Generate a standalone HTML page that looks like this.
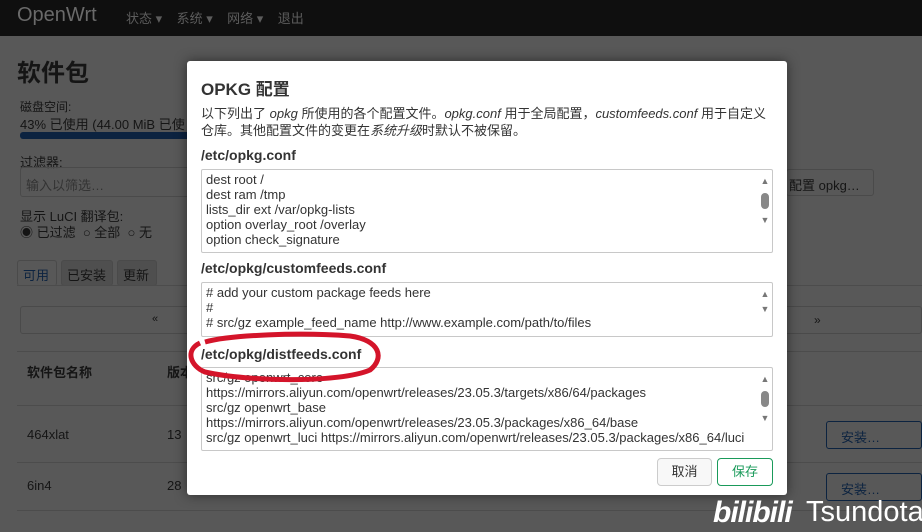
<!DOCTYPE html>
<html><head><meta charset="utf-8"><style>
*{box-sizing:border-box;margin:0;padding:0}
body{width:922px;height:532px;overflow:hidden;background:#585858;font-family:"Liberation Sans","Noto Sans CJK SC",sans-serif;color:#1a1a1a;position:relative;font-size:13px}
.a{position:absolute;white-space:nowrap}
.hdr{left:0;top:0;width:922px;height:36px;background:#0f0f0f}
.d{color:#151515}
.box{position:absolute;border:1px solid #4a4a4a;border-radius:3px}
.line{position:absolute;height:1px;background:#4c4c4c}
.modal{position:absolute;left:187px;top:61px;width:600px;height:434px;background:#fff;border-radius:3px;box-shadow:0 0 12px rgba(0,0,0,.5)}
.ta{position:absolute;left:14px;width:572px;border:1px solid #c8c8c8;border-radius:2px;font-size:13px;line-height:15px;color:#333;padding:2px 18px 0 4px;overflow:hidden}
.sb{position:absolute;right:2px;top:4px;width:10px;font-size:9px;color:#777;text-align:center}
.h{font-weight:bold;font-size:14px;color:#333}
.btn{position:absolute;height:28px;border-radius:4px;font-size:13px;text-align:center;line-height:26px}
</style></head><body>
<div class="a hdr"></div>
<div class="a" style="left:17px;top:4px;font-size:20px;color:#6a6a6a">OpenWrt</div>
<div class="a" style="left:126px;top:8px;color:#5c5c5c;font-size:13px">状态 ▾&nbsp;&nbsp;&nbsp; 系统 ▾&nbsp;&nbsp;&nbsp; 网络 ▾&nbsp;&nbsp;&nbsp; 退出</div>
<div class="a d" style="left:17px;top:53px;font-size:24px;font-weight:bold">软件包</div>
<div class="a d" style="left:20px;top:98px;font-size:12px">磁盘空间:</div>
<div class="a d" style="left:20px;top:114px;font-size:13px">43% 已使用 (44.00 MiB 已使</div>
<div class="a" style="left:20px;top:132px;width:170px;height:7px;background:#0c2340;border-radius:3px"></div>
<div class="a d" style="left:20px;top:152px;font-size:13px">过滤器:</div>
<div class="box" style="left:20px;top:167px;width:170px;height:30px"></div>
<div class="a" style="left:26px;top:175px;color:#333;font-size:13px">输入以筛选…</div>
<div class="a d" style="left:20px;top:206px;font-size:13px">显示 LuCI 翻译包:</div>
<div class="a d" style="left:20px;top:222px;font-size:13px">◉ 已过滤 &nbsp;○ 全部 &nbsp;○ 无</div>
<div class="box" style="left:17px;top:260px;width:40px;height:26px;border-bottom:none"></div>
<div class="a" style="left:23px;top:265px;color:#0c2340">可用</div>
<div class="box" style="left:61px;top:260px;width:52px;height:26px;background:#4f4f4f"></div>
<div class="a d" style="left:67px;top:265px">已安装</div>
<div class="box" style="left:117px;top:260px;width:40px;height:26px;background:#4f4f4f"></div>
<div class="a d" style="left:123px;top:265px">更新</div>
<div class="line" style="left:17px;top:285px;width:905px"></div>
<div class="box" style="left:20px;top:306px;width:902px;height:28px"></div>
<div class="a d" style="left:152px;top:313px;font-size:11px">«</div>
<div class="a d" style="left:814px;top:313px;font-size:12px">»</div>
<div class="line" style="left:17px;top:351px;width:905px"></div>
<div class="a d" style="left:27px;top:362px;font-weight:bold">软件包名称</div>
<div class="a d" style="left:167px;top:362px;font-weight:bold">版本</div>
<div class="line" style="left:17px;top:405px;width:905px"></div>
<div class="a d" style="left:27px;top:427px">464xlat</div>
<div class="a d" style="left:167px;top:427px">13</div>
<div class="line" style="left:17px;top:462px;width:905px"></div>
<div class="a d" style="left:27px;top:478px">6in4</div>
<div class="a d" style="left:167px;top:478px">28</div>
<div class="line" style="left:17px;top:510px;width:905px"></div>
<div class="box" style="left:786px;top:169px;width:88px;height:27px"></div>
<div class="a d" style="left:789px;top:175px">配置 opkg…</div>
<div class="box" style="left:826px;top:421px;width:96px;height:28px;border-color:#0c2340"></div>
<div class="a" style="left:841px;top:427px;color:#0c2340">安装…</div>
<div class="box" style="left:826px;top:473px;width:96px;height:28px;border-color:#0c2340"></div>
<div class="a" style="left:841px;top:479px;color:#0c2340">安装…</div>

<div class="modal">
<div class="a" style="left:14px;top:14px;font-size:17px;font-weight:bold;color:#333">OPKG 配置</div>
<div class="a" style="left:14px;top:44px;font-size:13px;color:#333;line-height:17px">以下列出了 <i>opkg</i> 所使用的各个配置文件。<i>opkg.conf</i> 用于全局配置，<i>customfeeds.conf</i> 用于自定义<br>仓库。其他配置文件的变更在<i>系统升级</i>时默认不被保留。</div>
<div class="a h" style="left:14px;top:86px">/etc/opkg.conf</div>
<div class="ta" style="top:108px;height:84px">dest root /<br>dest ram /tmp<br>lists_dir ext /var/opkg-lists<br>option overlay_root /overlay<br>option check_signature
<div class="sb">▲<div style="width:8px;height:16px;background:#888;border-radius:4px;margin:4px auto"></div>▼</div></div>
<div class="a h" style="left:14px;top:199px">/etc/opkg/customfeeds.conf</div>
<div class="ta" style="top:221px;height:55px">#&nbsp;add your custom package feeds here<br>#<br># src/gz example_feed_name http://www.example.com/path/to/files
<div class="sb">▲<br>▼</div></div>
<div class="a h" style="left:14px;top:285px">/etc/opkg/distfeeds.conf</div>
<div class="ta" style="top:306px;height:84px">src/gz openwrt_core<br>https://mirrors.aliyun.com/openwrt/releases/23.05.3/targets/x86/64/packages<br>src/gz openwrt_base<br>https://mirrors.aliyun.com/openwrt/releases/23.05.3/packages/x86_64/base<br>src/gz openwrt_luci https://mirrors.aliyun.com/openwrt/releases/23.05.3/packages/x86_64/luci
<div class="sb">▲<div style="width:8px;height:16px;background:#888;border-radius:4px;margin:4px auto"></div>▼</div></div>
<div class="btn" style="left:470px;top:397px;width:55px;border:1px solid #ccc;background:#f8f8f8;color:#333">取消</div>
<div class="btn" style="left:530px;top:397px;width:56px;border:1px solid #1a9a5a;color:#1a9a5a">保存</div>
</div>
<svg class="a" style="left:0;top:0" width="922" height="532"><path d="M205 342 C230 335 300 332 350 336 C380 340 385 358 370 370 C340 383 250 382 205 372 C190 366 185 350 200 343" fill="none" stroke="#d4142a" stroke-width="5"/></svg>
<div class="a" style="left:713px;top:496px;font-size:30px;font-weight:bold;color:#fff;font-style:italic;letter-spacing:-1px">bilibili</div>
<div class="a" style="left:806px;top:496px;font-size:29px;color:#fff">Tsundota</div>
</body></html>
